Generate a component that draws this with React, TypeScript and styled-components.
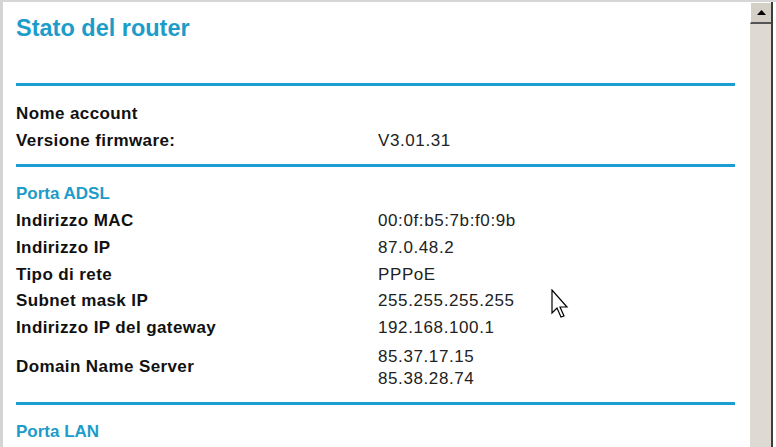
import React from 'react';
import styled, { createGlobalStyle } from 'styled-components';

const GlobalStyle = createGlobalStyle`
  html, body {
    margin: 0;
    padding: 0;
    background: #ffffff;
  }
  body {
    font-family: "Liberation Sans", Arial, sans-serif;
    color: #111;
  }
`;

const Frame = styled.div`
  display: flex;
  flex-flow: row nowrap;
  width: 776px;
  height: 447px;
  overflow: hidden;
  border-top: 2px solid #d6d6d6;
  box-sizing: border-box;
  position: relative;
`;

const LeftEdge = styled.div`
  width: 3px;
  flex-shrink: 0;
  background: #d4d4d4;
`;

const Content = styled.div`
  flex-grow: 1;
  padding: 0 14px 0 13px;
  display: flex;
  flex-flow: column nowrap;
`;

const Title = styled.h1`
  margin: 11px 0 0;
  font-size: 23.5px;
  line-height: 30px;
  font-weight: bold;
  color: #1d9cc9;
  height: 70px;
`;

const Rule = styled.div<{ $gapTop?: number; $gapBottom?: number }>`
  height: 3px;
  background: #1c9dd3;
  margin-top: ${p => p.$gapTop ?? 0}px;
  margin-bottom: ${p => p.$gapBottom ?? 0}px;
  flex-shrink: 0;
`;

const Table = styled.div`
  display: grid;
  grid-template-columns: 362px 1fr;
  font-size: 17px;
  line-height: 26.7px;
`;

const Label = styled.div<{ $tall?: boolean }>`
  font-weight: bold;
  color: #111;
  letter-spacing: 0.4px;
  display: flex;
  align-items: center;
  ${p => p.$tall && 'padding: 4px 0 12px;'}
`;

const Value = styled.div<{ $tall?: boolean }>`
  color: #222;
  letter-spacing: 0.6px;
  ${p => p.$tall && 'line-height: 22px; padding: 4px 0 12px;'}
`;

const Section = styled.div`
  grid-column: 1 / span 2;
  font-size: 17px;
  font-weight: bold;
  color: #1d9cc9;
`;

const Scrollbar = styled.div`
  width: 24px;
  flex-shrink: 0;
  display: flex;
  flex-flow: column nowrap;
  background: #dedad3;
  border-left: 1px solid #ffffff;
  border-right: 2px solid #3c3c3c;
  box-sizing: border-box;
`;

const ArrowButton = styled.div`
  height: 22px;
  background: #d4d0c8;
  border-top: 1px solid #ffffff;
  border-left: 1px solid #ffffff;
  border-bottom: 2px solid #555;
  box-sizing: border-box;
  display: flex;
  align-items: center;
  justify-content: center;
`;

const RightEdge = styled.div`
  width: 3px;
  flex-shrink: 0;
  background: #ffffff;
`;

const Cursor = styled.svg`
  position: absolute;
  left: 551px;
  top: 287px;
`;

const rows1: [string, string][] = [
  ['Nome account', ''],
  ['Versione firmware:', 'V3.01.31'],
];

const rows2: [string, string][] = [
  ['Indirizzo MAC', '00:0f:b5:7b:f0:9b'],
  ['Indirizzo IP', '87.0.48.2'],
  ['Tipo di rete', 'PPPoE'],
  ['Subnet mask IP', '255.255.255.255'],
  ['Indirizzo IP del gateway', '192.168.100.1'],
];

export default function App() {
  return (
    <>
      <GlobalStyle />
      <Frame>
        <LeftEdge />
        <Content>
          <Title>Stato del router</Title>
          <Rule $gapBottom={15} />
          <Table>
            {rows1.map(([l, v]) => (
              <React.Fragment key={l}>
                <Label>{l}</Label>
                <Value>{v}</Value>
              </React.Fragment>
            ))}
          </Table>
          <Rule $gapTop={10} $gapBottom={14} />
          <Table>
            <Section>Porta ADSL</Section>
            {rows2.map(([l, v]) => (
              <React.Fragment key={l}>
                <Label>{l}</Label>
                <Value>{v}</Value>
              </React.Fragment>
            ))}
            <Label $tall>Domain Name Server</Label>
            <Value $tall>
              85.37.17.15
              <br />
              85.38.28.74
            </Value>
          </Table>
          <Rule $gapBottom={14} />
          <Table>
            <Section>Porta LAN</Section>
          </Table>
        </Content>
        <Scrollbar>
          <ArrowButton>
            <svg width="9" height="5" viewBox="0 0 9 5">
              <path d="M4.5 0 L9 5 L0 5 Z" fill="#000" />
            </svg>
          </ArrowButton>
        </Scrollbar>
        <RightEdge />
        <Cursor width="20" height="34" viewBox="0 0 20 34">
          <path
            d="M1 1 L1 24 L6 19 L10 28 L13 27 L9 18 L16 18 Z"
            fill="#fff"
            stroke="#000"
            strokeWidth="1.2"
            strokeLinejoin="miter"
          />
        </Cursor>
      </Frame>
    </>
  );
}
